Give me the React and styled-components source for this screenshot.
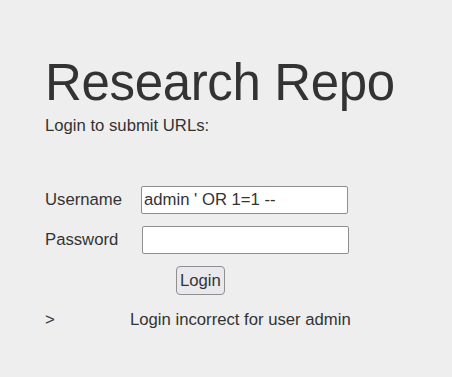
import styled, { createGlobalStyle } from "styled-components";

const Global = createGlobalStyle`
  html, body {
    margin: 0;
    padding: 0;
    background: #eeeeee;
  }
  body {
    font-family: "Liberation Sans", Arial, sans-serif;
    color: #333333;
  }
`;

export default function App() {
  return (
    <>
      <Global />
      <Page>
        <Title>Research Repo</Title>
        <Subtitle>Login to submit URLs:</Subtitle>

        <Form onSubmit={(e) => e.preventDefault()}>
          <Row>
            <Label>Username</Label>
            <Input type="text" defaultValue="admin ' OR 1=1 --" />
          </Row>
          <Row>
            <Label>Password</Label>
            <Input type="password" $shift={1} />
          </Row>
          <ButtonRow>
            <Button type="submit">Login</Button>
          </ButtonRow>
        </Form>

        <Message>
          <Prompt>&gt;</Prompt>
          <span>Login incorrect for user admin</span>
        </Message>
      </Page>
    </>
  );
}

const Page = styled.div`
  padding: 53px 0 0 45px;
  height: 377px;
  box-sizing: border-box;
`;

const Title = styled.h1`
  margin: 0;
  font-size: 51px;
  font-weight: 400;
  line-height: 60px;
  letter-spacing: -0.35px;
`;

const Subtitle = styled.p`
  margin: 3px 0 0;
  font-size: 16.7px;
  line-height: 20px;
`;

const Form = styled.form`
  margin-top: 50px;
  display: flex;
  flex-direction: column;
  gap: 12px;
`;

const Row = styled.div`
  display: flex;
  align-items: baseline;
`;

const Label = styled.label`
  width: 96px;
  font-size: 16.7px;
`;

const Input = styled.input`
  width: 207px;
  height: 28px;
  box-sizing: border-box;
  margin: 0 0 0 ${(p) => p.$shift || 0}px;
  padding: 1px 2px;
  font-family: "Liberation Sans", Arial, sans-serif;
  font-size: 16.7px;
  color: #333333;
  background: #ffffff;
  border: 1px solid #8f8f8f;
  border-radius: 2px;
`;

const ButtonRow = styled.div`
  padding-left: 131px;
`;

const Button = styled.button`
  height: 29px;
  padding: 0 3px;
  font-family: "Liberation Sans", Arial, sans-serif;
  font-size: 16.7px;
  color: #333333;
  background: #e9e9ed;
  border: 1px solid #8f8f8f;
  border-radius: 4px;
`;

const Message = styled.div`
  margin-top: 15px;
  display: flex;
  font-size: 16.7px;
  line-height: 20px;
`;

const Prompt = styled.span`
  width: 85px;
`;
